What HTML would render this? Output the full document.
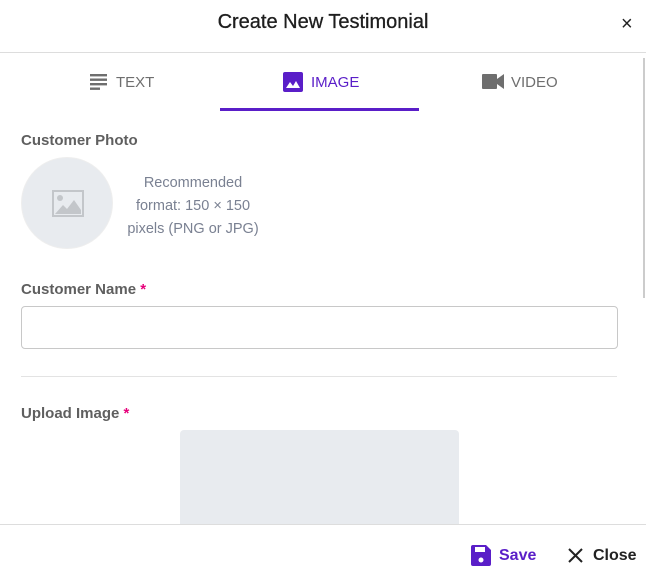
<!DOCTYPE html>
<html><head><style>
body{margin:0;width:646px;height:573px;background:#fff;font-family:"Liberation Sans",sans-serif;position:relative;overflow:hidden}
.a{position:absolute}
.lbl{font-size:15px;font-weight:bold;color:#5f5f5f}
.star{color:#e6007a}
.tab{font-size:15px;color:#6e6e6e;top:74px}
</style></head><body>
<div class="a" style="left:0;width:646px;top:11px;text-align:center;font-size:20px;color:#1e1e1e;-webkit-text-stroke:0.3px #1e1e1e">Create New Testimonial</div>
<div class="a" style="left:621px;top:13px;font-size:20px;color:#222">×</div>
<div class="a" style="left:0;top:52px;width:646px;height:1px;background:#ddd"></div>
<div class="a" style="left:643px;top:58px;width:2px;height:240px;background:#ccc"></div>

<svg class="a" style="left:90px;top:73px" width="18" height="18" viewBox="0 0 18 18"><g fill="#6e6e6e"><rect x="0" y="1" width="17" height="2.4"/><rect x="0" y="5.5" width="17" height="2.4"/><rect x="0" y="10" width="17" height="2.4"/><rect x="0" y="14.5" width="10" height="2.4"/></g></svg>
<div class="a tab" style="left:116px">TEXT</div>
<svg class="a" style="left:283px;top:72px" width="20" height="20" viewBox="0 0 20 20"><rect width="20" height="20" rx="2" fill="#5a1ec8"/><path d="M3 16 L7 10 L10 14 L13 9 L17 16Z" fill="#fff"/></svg>
<div class="a tab" style="left:311px;color:#5a1ec8">IMAGE</div>
<svg class="a" style="left:482px;top:74px" width="22" height="15" viewBox="0 0 22 15"><rect width="15" height="15" rx="1" fill="#6e6e6e"/><path d="M15 5 L22 0 V15 L15 10Z" fill="#6e6e6e"/></svg>
<div class="a tab" style="left:511px">VIDEO</div>
<div class="a" style="left:220px;top:108px;width:199px;height:3px;background:#5a1ec8"></div>

<div class="a lbl" style="left:21px;top:132px">Customer Photo</div>
<div class="a" style="left:22px;top:158px;width:90px;height:90px;border-radius:50%;background:#e8ebef;box-shadow:0 0 0 1px #eee"></div>
<svg class="a" style="left:52px;top:190px" width="32" height="27" viewBox="0 0 32 27"><rect x="1" y="1" width="30" height="25" fill="none" stroke="#c3c6ca" stroke-width="2"/><circle cx="8" cy="8" r="3" fill="#c3c6ca"/><path d="M3 24 L11 15 L15 19 L22 10 L29 20 V24Z" fill="#c3c6ca"/></svg>
<div class="a" style="left:118px;top:172px;width:150px;text-align:center;font-size:14.5px;line-height:23px;color:#7a8192">Recommended<br>format: 150 × 150<br>pixels (PNG or JPG)</div>

<div class="a lbl" style="left:21px;top:281px">Customer Name <span class="star">*</span></div>
<div class="a" style="left:21px;top:306px;width:595px;height:41px;border:1px solid #c8c8c8;border-radius:4px"></div>
<div class="a" style="left:21px;top:376px;width:596px;height:1px;background:#e3e3e3"></div>
<div class="a lbl" style="left:21px;top:405px">Upload Image <span class="star">*</span></div>
<div class="a" style="left:180px;top:430px;width:279px;height:94px;background:#e8ebef;border-radius:4px 4px 0 0"></div>

<div class="a" style="left:0;top:524px;width:646px;height:1px;background:#ddd"></div>
<svg class="a" style="left:471px;top:545px" width="20" height="21" viewBox="0 0 20 21"><path d="M0 2 Q0 0 2 0 H15 L20 5 V19 Q20 21 18 21 H2 Q0 21 0 19Z" fill="#5a1ec8"/><rect x="4" y="2" width="10" height="5" fill="#fff"/><circle cx="10" cy="15" r="2.5" fill="#fff"/></svg>
<div class="a" style="left:499px;top:547px;font-size:16px;font-weight:bold;color:#5a1ec8">Save</div>
<svg class="a" style="left:568px;top:548px" width="15" height="15" viewBox="0 0 15 15"><path d="M1 1 L14 14 M14 1 L1 14" stroke="#222" stroke-width="2"/></svg>
<div class="a" style="left:593px;top:547px;font-size:16px;font-weight:bold;color:#222">Close</div>
</body></html>
